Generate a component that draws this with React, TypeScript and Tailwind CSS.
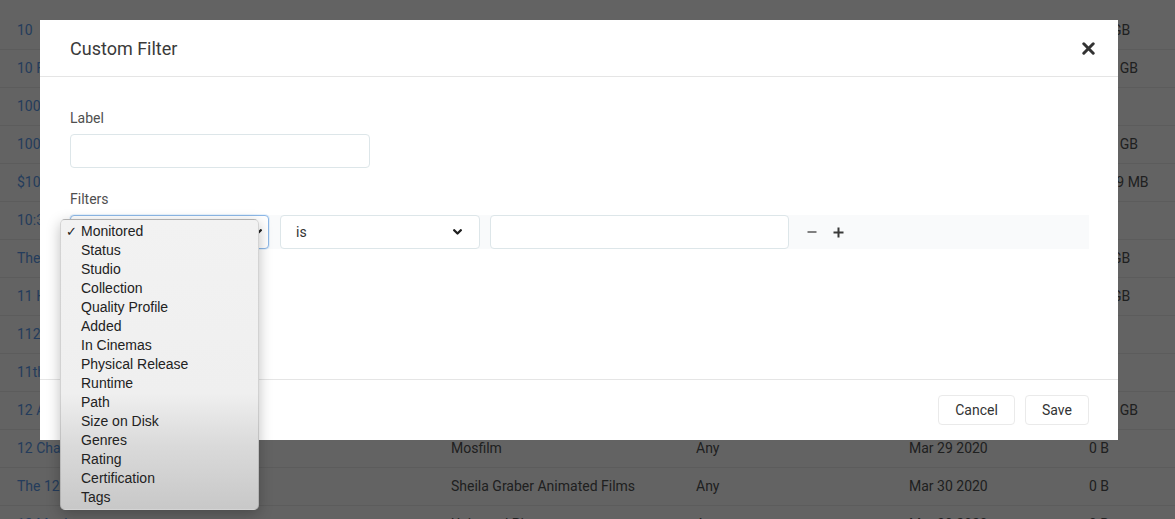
import React from "react";

type Row = { t: string; s: string; q: string; d: string; z: string };

const rows: Row[] = [
  { t: "10", s: "Orion Pictures", q: "Any", d: "Mar 29 2020", z: "1.5 GB" },
  { t: "10 Fingers of Death", s: "Lionsgate", q: "Any", d: "Mar 29 2020", z: "12.3 GB" },
  { t: "100 Girls", s: "Cinema Club", q: "Any", d: "Mar 29 2020", z: "" },
  { t: "1000 to 1", s: "Cinedigm", q: "Any", d: "Mar 29 2020", z: "10.4 GB" },
  { t: "$100,000 Quest", s: "Independent", q: "Any", d: "Mar 29 2020", z: "334.9 MB" },
  { t: "10:30 P.M. Summer", s: "Lopert Pictures", q: "Any", d: "Mar 29 2020", z: "" },
  { t: "The 10th Victim", s: "Champion", q: "Any", d: "Mar 29 2020", z: "1.8 GB" },
  { t: "11 Harrowhouse", s: "20th Century Fox", q: "Any", d: "Mar 29 2020", z: "2.2 GB" },
  { t: "112 Weddings", s: "HBO Documentary", q: "Any", d: "Mar 29 2020", z: "" },
  { t: "11th Hour", s: "Warner Independent", q: "Any", d: "Mar 29 2020", z: "" },
  { t: "12 Angry Men", s: "Orion-Nova", q: "Any", d: "Mar 29 2020", z: "10.2 GB" },
  { t: "12 Chairs", s: "Mosfilm", q: "Any", d: "Mar 29 2020", z: "0 B" },
  { t: "The 12 Days of Christmas", s: "Sheila Graber Animated Films", q: "Any", d: "Mar 30 2020", z: "0 B" },
  { t: "12 Monkeys", s: "Universal Pictures", q: "Any", d: "Mar 30 2020", z: "0 B" },
];

const options = [
  "Monitored",
  "Status",
  "Studio",
  "Collection",
  "Quality Profile",
  "Added",
  "In Cinemas",
  "Physical Release",
  "Runtime",
  "Path",
  "Size on Disk",
  "Genres",
  "Rating",
  "Certification",
  "Tags",
];

function Chevron() {
  return (
    <svg width="9" height="6" viewBox="0 0 9 6" className="shrink-0">
      <path d="M1.2 1.2 L4.5 4.5 L7.8 1.2" fill="none" stroke="#1f1f1f" strokeWidth="2.3" strokeLinecap="round" strokeLinejoin="round" />
    </svg>
  );
}

export default function App() {
  return (
    <div
      className="relative w-[1175px] h-[519px] overflow-hidden bg-white text-[14px] text-[#515253]"
      style={{ fontFamily: "Roboto, 'Open Sans', sans-serif" }}
    >
      {/* background table */}
      <div className="h-[12px]" />
      {rows.map((r, i) => (
        <div
          key={i}
          className="grid grid-cols-[451px_245px_213px_180px_1fr] h-[38px] items-center border-b border-[#eeeeee]"
        >
          <div className="pl-[17px] text-[#5d9cec] whitespace-nowrap overflow-hidden">{r.t}</div>
          <div className="whitespace-nowrap">{r.s}</div>
          <div>{r.q}</div>
          <div>{r.d}</div>
          <div className="whitespace-nowrap">{r.z}</div>
        </div>
      ))}

      {/* overlay */}
      <div className="absolute inset-0 bg-[rgba(0,0,0,0.61)]" />

      {/* modal */}
      <div className="absolute left-[40px] top-[20px] w-[1078px] h-[420px] bg-white flex flex-col">
        <div className="h-[57px] shrink-0 flex items-center justify-between pl-[30px] pr-[23px] border-b border-[#e5e5e5]">
          <div className="text-[18px] text-[#3a3a3a]">Custom Filter</div>
          <svg width="13" height="13" viewBox="0 0 13 13">
            <path d="M1.8 1.8 L11.2 11.2 M11.2 1.8 L1.8 11.2" stroke="#333" strokeWidth="3" strokeLinecap="round" />
          </svg>
        </div>
        <div className="flex-1 px-[30px] pt-[31px]">
          <div className="leading-[21px] mb-[5px] text-[#4f4f4f]">Label</div>
          <div className="w-[300px] h-[34px] rounded-[4px] border border-[#dde6e9] bg-white" />
          <div className="leading-[21px] mt-[21px] mb-[5px] text-[#4f4f4f]">Filters</div>
          <div className="w-[1019px] h-[34px] bg-[#f9fafb] flex items-center">
            <div className="w-[199px] h-[34px] rounded-[4px] border border-[#8db8e8] bg-white flex items-center justify-between pl-[16px] pr-[6px] shadow-[0_0_0_1px_rgba(102,175,233,0.15)]">
              <span className="text-[#333]">Monitored</span>
              <Chevron />
            </div>
            <div className="ml-[11px] w-[200px] h-[34px] rounded-[4px] border border-[#dde6e9] bg-white flex items-center justify-between pl-[15px] pr-[17px]">
              <span className="text-[#333]">is</span>
              <Chevron />
            </div>
            <div className="ml-[10px] w-[299px] h-[34px] rounded-[4px] border border-[#dde6e9] bg-white" />
            <div className="ml-[18px] flex items-center gap-[16px]">
              <svg width="10" height="10" viewBox="0 0 10 10">
                <path d="M0.5 5 H9.5" stroke="#808080" strokeWidth="2" />
              </svg>
              <svg width="11" height="11" viewBox="0 0 11 11">
                <path d="M0.5 5.5 H10.5 M5.5 0.5 V10.5" stroke="#3a3a3a" strokeWidth="2" />
              </svg>
            </div>
          </div>
        </div>
        <div className="h-[61px] shrink-0 border-t border-[#e5e5e5] flex items-center justify-end gap-[10px] pr-[29px]">
          <div className="w-[77px] h-[30px] rounded-[4px] border border-[#eaeaea] flex items-center justify-center text-[#333]">
            Cancel
          </div>
          <div className="w-[64px] h-[30px] rounded-[4px] border border-[#eaeaea] flex items-center justify-center text-[#333]">
            Save
          </div>
        </div>
      </div>

      {/* native dropdown menu */}
      <div
        className="absolute left-[60px] top-[219px] w-[199px] h-[291px] rounded-[5px] border border-[rgba(0,0,0,0.12)] shadow-[0_4px_14px_rgba(0,0,0,0.25)] bg-[linear-gradient(to_bottom,#f2f2f2_0%,#efefef_60%,#dadada_78%,#c8c8c8_100%)] pt-[2px] text-[#222]"
        style={{ fontFamily: "'Liberation Sans', Arial, sans-serif" }}
      >
        {options.map((o, i) => (
          <div key={o} className="relative h-[19px] leading-[19px] pl-[20px] text-[14px]">
            {i === 0 && <span className="absolute left-[5px] top-0 text-[13px]">✓</span>}
            {o}
          </div>
        ))}
      </div>
    </div>
  );
}
